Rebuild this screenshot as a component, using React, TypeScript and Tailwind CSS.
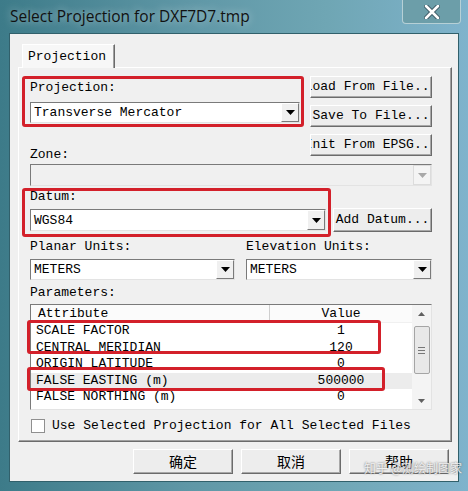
import React from "react";

const mono = "font-['Liberation_Mono','Noto_Sans_CJK_SC',monospace] text-[13px] text-black";

function Arrow({ disabled }: { disabled?: boolean }) {
  return (
    <svg width="9" height="5" viewBox="0 0 9 5">
      <path d="M0 0h9L4.5 5z" fill={disabled ? "#a8a8a8" : "#000"} />
    </svg>
  );
}

function Combo({
  value,
  width,
  disabled,
  height = "h-[22px]",
}: {
  value?: string;
  width: string;
  disabled?: boolean;
  height?: string;
}) {
  return (
    <div
      className={`${width} ${height} flex border border-t-[#7a7a7a] border-l-[#7a7a7a] border-b-[#e3e3e3] border-r-[#e3e3e3] ${
        disabled ? "bg-[#f0f0f0]" : "bg-white"
      }`}
    >
      <div className={`${mono} flex flex-1 items-center pl-[3px] leading-none`}>{value}</div>
      <div
        className={`flex w-[18px] items-center justify-center border ${
          disabled
            ? "border-[#dcdcdc] bg-[#f4f4f4]"
            : "border-t-white border-l-white border-b-[#7a7a7a] border-r-[#7a7a7a] bg-[#f0f0f0]"
        }`}
      >
        <Arrow disabled={disabled} />
      </div>
    </div>
  );
}

function Btn({ label, className }: { label: string; className: string }) {
  return (
    <div
      className={`${className} ${mono} flex items-center justify-center overflow-hidden whitespace-nowrap border border-t-white border-l-white border-b-[#6b6b6b] border-r-[#6b6b6b] bg-[#ededed] shadow-[inset_-1px_-1px_0_#a8a8a8]`}
    >
      {label}
    </div>
  );
}

function CnBtn({ label }: { label: string }) {
  return (
    <div className="flex h-[25px] w-[100px] items-center justify-center border border-t-white border-l-white border-b-[#6b6b6b] border-r-[#6b6b6b] bg-[#ededed] font-['Noto_Sans_CJK_SC',sans-serif] text-[14px] text-black shadow-[inset_-1px_-1px_0_#a8a8a8]">
      {label}
    </div>
  );
}

const rows = [
  { name: "SCALE FACTOR", value: "1" },
  { name: "CENTRAL MERIDIAN", value: "120" },
  { name: "ORIGIN LATITUDE", value: "0" },
  { name: "FALSE EASTING (m)", value: "500000", hi: true },
  { name: "FALSE NORTHING (m)", value: "0" },
];

export default function App() {
  return (
    <div className="relative flex h-[491px] w-[468px] flex-col overflow-hidden bg-[linear-gradient(90deg,#3d7b89_0%,#5f97a6_40%,#6fa6b4_70%,#7fb3cc_100%)]">
      {/* title bar */}
      <div className="flex h-[33px] items-start">
        <div className="pl-[10px] pt-[6px] font-['Open_Sans',sans-serif] text-[15.5px] leading-[20px] text-[#111] [text-shadow:0_0_8px_rgba(255,255,255,0.6)]">
          Select Projection for DXF7D7.tmp
        </div>
        <div className="mr-[7px] ml-auto flex h-[24px] w-[59px] items-center justify-center rounded-b-[4px] border border-t-0 border-[#d6e6ea]/70 bg-[#6c9ea9]">
          <svg width="16" height="14" viewBox="0 0 16 14">
            <path d="M2 1l12 12M14 1L2 13" stroke="#3a5560" strokeWidth="4.5" strokeLinecap="round" />
            <path d="M2 1l12 12M14 1L2 13" stroke="#fff" strokeWidth="2.6" strokeLinecap="round" />
          </svg>
        </div>
      </div>

      {/* client area */}
      <div className="mx-[9px] flex h-[449px] flex-col border border-[#31606b] bg-[#f0f0f0]">
        {/* tab */}
        <div className="pl-[12px] pt-[10px]">
          <div className={`${mono} relative z-10 -mb-[1px] flex h-[24px] w-[93px] items-center border border-b-0 border-t-white border-l-white border-r-[#6b6b6b] bg-[#f7f7f7] pl-[5px] shadow-[inset_-1px_0_0_#a0a0a0]`}>
            Projection
          </div>
        </div>

        {/* tab panel */}
        <div className="ml-[8px] flex h-[375px] w-[434px] flex-col border border-t-white border-l-white border-b-[#6b6b6b] border-r-[#6b6b6b] pl-[11px] pt-[8px] shadow-[inset_-1px_-1px_0_#a0a0a0]">
          <div className="flex">
            <div className="flex w-[270px] flex-col">
              <div className={`${mono} mt-[4px] h-[16px] leading-[16px]`}>Projection:</div>
              <div className="mt-[6px]">
                <Combo width="w-[270px]" value="Transverse Mercator" height="h-[21px]" />
              </div>
              <div className={`${mono} mt-[24px] h-[16px] leading-[16px]`}>Zone:</div>
            </div>
            <div className="ml-[10px] flex flex-col gap-[7px]">
              <Btn className="h-[22px] w-[122px]" label="Load From File..." />
              <Btn className="h-[22px] w-[122px]" label="Save To File..." />
              <Btn className="h-[22px] w-[122px]" label="Init From EPSG..." />
            </div>
          </div>

          <div className="mt-[1px]">
            <Combo width="w-[402px]" disabled />
          </div>

          <div className={`${mono} mt-[3px] h-[16px] leading-[16px]`}>Datum:</div>
          <div className="mt-[3px] flex items-center">
            <Combo width="w-[296px]" value="WGS84" />
            <Btn className="ml-[7px] h-[24px] w-[99px]" label="Add Datum..." />
          </div>

          <div className="mt-[7px] flex">
            <div className="flex w-[205px] flex-col">
              <div className={`${mono} h-[16px] leading-[16px]`}>Planar Units:</div>
              <div className="mt-[4px]">
                <Combo width="w-[205px]" value="METERS" height="h-[21px]" />
              </div>
            </div>
            <div className="ml-[11px] flex w-[186px] flex-col">
              <div className={`${mono} h-[16px] leading-[16px]`}>Elevation Units:</div>
              <div className="mt-[4px]">
                <Combo width="w-[186px]" value="METERS" height="h-[21px]" />
              </div>
            </div>
          </div>

          <div className={`${mono} mt-[5px] h-[16px] leading-[16px]`}>Parameters:</div>

          {/* list */}
          <div className="mt-[3px] flex h-[106px] w-[402px] border border-t-[#7a7a7a] border-l-[#7a7a7a] border-b-[#e3e3e3] border-r-[#e3e3e3] bg-white">
            <div className="flex flex-1 flex-col overflow-hidden">
              <div className={`${mono} flex h-[18px] shrink-0 border-b border-[#f0f0f0] bg-[#fbfbfb] leading-[18px]`}>
                <div className="w-[239px] border-r border-[#cfcfcf] pl-[7px]">Attribute</div>
                <div className="flex-1 text-center">Value</div>
              </div>
              {rows.map((r) => (
                <div
                  key={r.name}
                  className={`${mono} flex h-[16.5px] shrink-0 leading-[16.5px] ${r.hi ? "bg-[#ececec]" : ""}`}
                >
                  <div className="w-[239px] pl-[5px]">{r.name}</div>
                  <div className="flex-1 text-center">{r.value}</div>
                </div>
              ))}
            </div>
            <div className="flex w-[19px] flex-col items-center bg-[#f4f4f4]">
              <div className="flex h-[17px] w-full items-center justify-center">
                <svg width="7" height="4" viewBox="0 0 7 4">
                  <path d="M0 4h7L3.5 0z" fill="#606060" />
                </svg>
              </div>
              <div className="mt-[4px] flex h-[48px] w-[16px] items-center justify-center rounded-[2px] border border-[#a5a5a5] bg-[#e8e8e8]">
                <div className="flex flex-col gap-[2px]">
                  <div className="h-px w-[7px] bg-[#777]" />
                  <div className="h-px w-[7px] bg-[#777]" />
                  <div className="h-px w-[7px] bg-[#777]" />
                </div>
              </div>
              <div className="mt-auto flex h-[17px] w-full items-center justify-center">
                <svg width="7" height="4" viewBox="0 0 7 4">
                  <path d="M0 0h7L3.5 4z" fill="#606060" />
                </svg>
              </div>
            </div>
          </div>

          <div className="mt-[8px] flex items-center">
            <div className="ml-[1px] h-[14px] w-[14px] border border-[#8f8f8f] bg-white" />
            <div className={`${mono} ml-[7px] leading-[16px]`}>
              Use Selected Projection for All Selected Files
            </div>
          </div>
        </div>

        {/* bottom buttons */}
        <div className="mt-[7px] flex justify-end gap-[8px] pr-[9px]">
          <CnBtn label="确定" />
          <CnBtn label="取消" />
          <CnBtn label="帮助" />
        </div>
      </div>

      {/* annotation boxes */}
      <div className="pointer-events-none absolute left-[22px] top-[76px] h-[51px] w-[282px] rounded-[3px] border-[3px] border-[#d3202a]" />
      <div className="pointer-events-none absolute left-[22px] top-[188px] h-[49px] w-[309px] rounded-[3px] border-[3px] border-[#d3202a]" />
      <div className="pointer-events-none absolute left-[27px] top-[320px] h-[34px] w-[354px] rounded-[3px] border-[3px] border-[#d3202a]" />
      <div className="pointer-events-none absolute left-[27px] top-[367px] h-[24px] w-[358px] rounded-[3px] border-[3px] border-[#d3202a]" />

      {/* watermark */}
      <div className="pointer-events-none absolute left-[364px] top-[460px] whitespace-nowrap font-['Noto_Sans_CJK_SC',sans-serif] text-[12px] leading-[16px] text-white/85 [text-shadow:0_0_2px_#555]">
        知乎 @测绘制图家
      </div>
    </div>
  );
}
